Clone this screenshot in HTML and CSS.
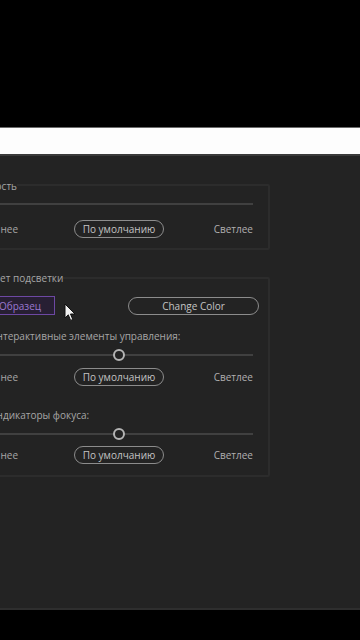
FILE: index.html
```html
<!DOCTYPE html>
<html lang="ru">
<head>
<meta charset="utf-8">
<link rel="stylesheet" href="styles.css">
</head>
<body>
<div class="screen">
  <div class="bar-black"></div>
  <div class="titlebar"></div>
  <div class="panel">
    <div class="dialog">
      <div class="group group-brightness">
        <div class="group-title title-wide">Яркость</div>
        <div class="slider slider-first"><div class="track"></div><div class="thumb thumb-hidden"></div></div>
        <div class="row">
          <span class="side">Темнее</span>
          <span class="btn">По умолчанию</span>
          <span class="side side-right">Светлее</span>
        </div>
      </div>
      <div class="group group-highlight">
        <div class="group-title">Цвет подсветки</div>
        <div class="swatch-row">
          <span class="swatch">Образец</span>
          <span class="btn btn-wide">Change Color</span>
        </div>
        <div class="label label-first">Интерактивные элементы управления:</div>
        <div class="slider"><div class="track"></div><div class="thumb"></div></div>
        <div class="row row-tight">
          <span class="side">Темнее</span>
          <span class="btn">По умолчанию</span>
          <span class="side side-right">Светлее</span>
        </div>
        <div class="label label-second">Индикаторы фокуса:</div>
        <div class="slider slider-second"><div class="track"></div><div class="thumb"></div></div>
        <div class="row row-last">
          <span class="side">Темнее</span>
          <span class="btn">По умолчанию</span>
          <span class="side side-right">Светлее</span>
        </div>
      </div>
    </div>
    <svg class="cursor" width="12" height="19" viewBox="0 0 12 19">
      <path d="M1 1 L1 15 L4.3 11.8 L6.6 17.4 L8.8 16.5 L6.5 11 L11 11 Z" fill="#f2f2f2" stroke="#111" stroke-width="1" stroke-linejoin="round"/>
    </svg>
  </div>
</div>
</body>
</html>
```

FILE: styles.css
```css
* { box-sizing: border-box; }
html, body {
  margin: 0;
  padding: 0;
  background: #000;
}
.screen {
  width: 360px;
  height: 640px;
  overflow: hidden;
  background: #000;
  font-family: "Open Sans", "Noto Sans", sans-serif;
  font-size: 10px;
  line-height: 12px;
  color: #a6a6a6;
}
.bar-black {
  height: 127px;
  background: #000;
}
.titlebar {
  height: 29px;
  background: #fdfdfd;
  border-top: 1px solid #6b6b6b;
  border-bottom: 2px solid #3a3a3a;
}
.panel {
  position: relative;
  height: 454px;
  background: #232323;
  border-bottom: 2px solid #2e2e2e;
  overflow: hidden;
  padding-top: 28px;
}
.dialog {
  margin-left: -32px;
  width: 302px;
}
.group {
  border: 2px solid #2c2c2c;
  border-radius: 2px;
  padding: 0 15px 0 15px;
}
.group-brightness {
  padding-bottom: 10px;
}
.group-highlight {
  margin-top: 27px;
  padding-bottom: 11px;
}
.group-title {
  width: fit-content;
  margin-top: -7px;
  margin-left: 2px;
  background: #232323;
  white-space: nowrap;
}
.title-wide {
  margin-left: -7px;
  margin-top: -6px;
}
.slider {
  position: relative;
  height: 12px;
  margin-top: 7px;
}
.slider-first {
  margin-top: 6px;
}
.track {
  position: absolute;
  left: 0;
  right: 0;
  top: 5px;
  height: 2px;
  background: #404040;
}
.thumb {
  position: absolute;
  left: calc(50% - 6px);
  top: 0;
  width: 12px;
  height: 12px;
  border: 2px solid #b4b4b4;
  border-radius: 50%;
  background: #232323;
}
.thumb-hidden {
  left: -40px;
}
.row {
  display: grid;
  grid-template-columns: 1fr auto 1fr;
  align-items: center;
  margin-top: 10px;
  height: 18px;
}
.row-tight { margin-top: 7px; }
.row-last { margin-top: 6px; }
.side {
  white-space: nowrap;
  margin-left: -3px;
}
.side-right {
  justify-self: end;
  margin-left: 0;
  color: #b0b0b0;
}
.btn {
  display: inline-flex;
  align-items: center;
  justify-content: center;
  height: 18px;
  width: 90px;
  border: 1.5px solid #8c8c8c;
  border-radius: 9px;
  color: #c4c4c4;
  white-space: nowrap;
}
.swatch-row {
  display: flex;
  justify-content: space-between;
  align-items: center;
  margin-top: 12px;
  margin-right: -6px;
  height: 19px;
}
.swatch {
  display: inline-flex;
  align-items: center;
  justify-content: center;
  width: 70px;
  height: 19px;
  border: 1.5px solid #6d48a3;
  background: #271f33;
  color: #9b78d0;
}
.btn-wide {
  width: 131px;
}
.label {
  white-space: nowrap;
  margin-left: 4px;
}
.label-first { margin-top: 15px; }
.label-second { margin-top: 23px; }
.cursor {
  position: absolute;
  left: 64px;
  top: 147px;
}
```
